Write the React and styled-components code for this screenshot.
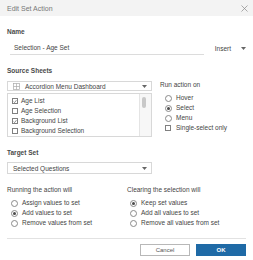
import React from 'react'
import styled, { createGlobalStyle } from 'styled-components'

const Global = createGlobalStyle`
  html, body { margin: 0; padding: 0; background: #fff; }
  body { font-family: "Liberation Sans", Arial, sans-serif; color: #444; }
`

const Dialog = styled.div`
  width: 253px;
  height: 260px;
  background: #fff;
  display: flex;
  flex-direction: column;
  font-size: 6.5px;
  overflow: hidden;
`

const Header = styled.div`
  height: 16px;
  background: #f3f3f3;
  display: flex;
  align-items: center;
  justify-content: space-between;
  padding: 0 5px 0 7px;
  font-size: 7px;
  color: #777;
`

const Body = styled.div`
  padding: 0 7px;
  display: flex;
  flex-direction: column;
`

const Label = styled.div`
  line-height: 8px;
  height: 8px;
  font-weight: ${p => (p.$bold ? 700 : 400)};
  margin-top: ${p => p.$top || 0}px;
  color: ${p => (p.$bold ? '#4a4a4a' : '#444')};
  white-space: nowrap;
`

const NameRow = styled.div`
  margin-top: 6px;
  display: flex;
  align-items: center;
  height: 13px;
`

const NameInput = styled.div`
  width: 194px;
  margin-left: 3px;
  height: 12px;
  line-height: 12px;
  padding-left: 4px;
  border-bottom: 1px solid #dcdcdc;
`

const Inline = styled.div`
  margin-left: 11px;
  display: flex;
  align-items: center;
  gap: 10px;
  height: 12px;
`

const Split = styled.div`
  display: grid;
  grid-template-columns: ${p => p.$cols};
  column-gap: ${p => p.$gap || 0}px;
  margin-top: ${p => p.$top || 0}px;
`

const Column = styled.div`
  display: flex;
  flex-direction: column;
`

const Select = styled.div`
  height: ${p => p.$h || 10}px;
  box-sizing: border-box;
  border: 1px solid #d8d8d8;
  display: flex;
  align-items: center;
  padding: 0 4px 0 5px;
  gap: 5px;
  margin-top: ${p => p.$top || 0}px;
`

const Grow = styled.span`
  flex: 1;
  white-space: nowrap;
`

const ListBox = styled.div`
  margin-top: 2px;
  height: 44px;
  box-sizing: border-box;
  border: 1px solid #d8d8d8;
  display: flex;
  overflow: hidden;
`

const Items = styled.div`
  flex: 1;
  padding: 2px 0 0 3px;
`

const Track = styled.div`
  width: 8px;
  border-left: 1px solid #e4e4e4;
  background: #f7f7f7;
  padding: 3px 1px 0 2px;
`

const Thumb = styled.div`
  width: 4px;
  height: 11px;
  border-radius: 2px;
  background: #c8c8c8;
`

const Option = styled.div`
  height: 10px;
  line-height: 10px;
  display: flex;
  align-items: center;
  gap: ${p => p.$gap || 3}px;
  padding-left: ${p => p.$indent || 0}px;
  white-space: nowrap;
`

const Box = styled.span`
  width: 6px;
  height: 6px;
  box-sizing: border-box;
  border: 1px solid #808080;
  display: inline-flex;
  align-items: center;
  justify-content: center;
  flex: none;
`

const Circle = styled.span`
  width: 7px;
  height: 7px;
  box-sizing: border-box;
  border-radius: 50%;
  border: 1px solid #8a8a8a;
  display: inline-flex;
  align-items: center;
  justify-content: center;
  flex: none;
  &::after {
    content: '';
    width: 3px;
    height: 3px;
    border-radius: 50%;
    background: ${p => (p.$on ? '#4a4a4a' : 'transparent')};
  }
`

const Options = styled.div`
  margin-top: 4px;
  display: flex;
  flex-direction: column;
`

const Rule = styled.div`
  margin-top: 10px;
  height: 1px;
  background: #e2e2e2;
`

const Footer = styled.div`
  margin-top: 5px;
  display: flex;
  justify-content: flex-end;
  gap: 6px;
`

const Button = styled.div`
  width: 50px;
  height: 12px;
  box-sizing: border-box;
  display: flex;
  align-items: center;
  justify-content: center;
  font-size: 6px;
  border: 1px solid ${p => (p.$primary ? '#1f6aa6' : '#b8b8b8')};
  background: ${p => (p.$primary ? '#1f6aa6' : '#fff')};
  color: ${p => (p.$primary ? '#fff' : '#555')};
  font-weight: ${p => (p.$primary ? 700 : 400)};
`

const Caret = () => (
  <svg width="5" height="3" viewBox="0 0 5 3">
    <path d="M0 0h5L2.5 3z" fill="#666" />
  </svg>
)

const Check = ({ on }) => (
  <Box>
    {on && (
      <svg width="5" height="5" viewBox="0 0 5 5">
        <path d="M0.8 2.6l1.2 1.2 2.3-3" stroke="#555" strokeWidth="0.8" fill="none" />
      </svg>
    )}
  </Box>
)

const Close = () => (
  <svg width="7" height="7" viewBox="0 0 7 7">
    <path d="M0.5 0.5l6 6M6.5 0.5l-6 6" stroke="#888" strokeWidth="0.7" />
  </svg>
)

const DashIcon = () => (
  <svg width="7" height="7" viewBox="0 0 7 7">
    <rect x="0.5" y="0.5" width="6" height="6" fill="none" stroke="#aaa" strokeWidth="0.7" />
    <path d="M3.5 0.5v6M0.5 3.5h6" stroke="#aaa" strokeWidth="0.7" />
  </svg>
)

const sheets = [
  { name: 'Age List', on: true },
  { name: 'Age Selection', on: false },
  { name: 'Background List', on: true },
  { name: 'Background Selection', on: false },
]

const Radio = ({ on, children, indent }) => (
  <Option $indent={indent} $gap={4}>
    <Circle $on={on} />
    {children}
  </Option>
)

export default function App() {
  return (
    <Dialog>
      <Global />
      <Header>
        <span>Edit Set Action</span>
        <Close />
      </Header>
      <Body>
        <Label $bold $top={12}>Name</Label>
        <NameRow>
          <NameInput>Selection - Age Set</NameInput>
          <Inline>
            <span>Insert</span>
            <Caret />
          </Inline>
        </NameRow>

        <Label $bold $top={12}>Source Sheets</Label>
        <Split $cols="145px 1fr" $gap={8} $top={6}>
          <Column>
            <Select>
              <DashIcon />
              <Grow>Accordion Menu Dashboard</Grow>
              <Caret />
            </Select>
            <ListBox>
              <Items>
                {sheets.map(s => (
                  <Option key={s.name} $indent={1}>
                    <Check on={s.on} />
                    {s.name}
                  </Option>
                ))}
              </Items>
              <Track>
                <Thumb />
              </Track>
            </ListBox>
          </Column>
          <Column>
            <Label>Run action on</Label>
            <Options>
              <Radio indent={5}>Hover</Radio>
              <Radio indent={5} on>Select</Radio>
              <Radio indent={5}>Menu</Radio>
              <Option $indent={5} $gap={5}>
                <Check />
                Single-select only
              </Option>
            </Options>
          </Column>
        </Split>

        <Label $bold $top={12}>Target Set</Label>
        <Split $cols="145px 1fr" $top={5}>
          <Select $h={12}>
            <Grow>Selected Questions</Grow>
            <Caret />
          </Select>
        </Split>

        <Split $cols="120px 1fr" $top={12}>
          <Column>
            <Label>Running the action will</Label>
            <Options>
              <Radio indent={4}>Assign values to set</Radio>
              <Radio indent={4} on>Add values to set</Radio>
              <Radio indent={4}>Remove values from set</Radio>
            </Options>
          </Column>
          <Column>
            <Label>Clearing the selection will</Label>
            <Options>
              <Radio indent={3} on>Keep set values</Radio>
              <Radio indent={3}>Add all values to set</Radio>
              <Radio indent={3}>Remove all values from set</Radio>
            </Options>
          </Column>
        </Split>

        <Rule />
        <Footer>
          <Button>Cancel</Button>
          <Button $primary>OK</Button>
        </Footer>
      </Body>
    </Dialog>
  )
}
